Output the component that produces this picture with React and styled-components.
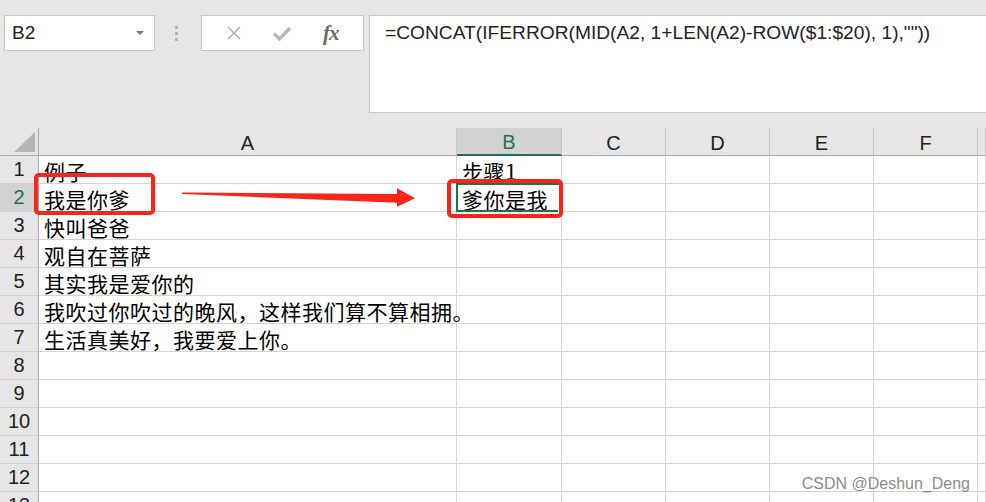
import React from 'react'
import styled, { createGlobalStyle } from 'styled-components'

const GlobalStyle = createGlobalStyle`
  html, body {
    margin: 0;
    padding: 0;
    background: #ffffff;
  }
  * {
    box-sizing: border-box;
  }
`

const Page = styled.div`
  position: relative;
  width: 986px;
  height: 502px;
  overflow: hidden;
  background: #ffffff;
  font-family: "Liberation Sans", Arial, sans-serif;
`

const Toolbar = styled.div`
  height: 128px;
  background: #e6e6e6;
  display: flex;
  align-items: flex-start;
  padding: 15px 0 0 4px;
`

const NameBox = styled.div`
  width: 151px;
  height: 36px;
  background: #fff;
  border: 1px solid #c6c6c6;
  display: flex;
  align-items: center;
  justify-content: space-between;
  padding: 0 10px 0 7px;
  font-size: 19px;
  color: #222;
`

const Caret = styled.span`
  width: 0;
  height: 0;
  border-left: 4px solid transparent;
  border-right: 4px solid transparent;
  border-top: 4px solid #777;
`

const Grip = styled.div`
  width: 46px;
  height: 36px;
  display: flex;
  flex-direction: column;
  align-items: center;
  justify-content: center;
  gap: 3px;
  padding-right: 3px;
`

const Dot = styled.span`
  width: 3px;
  height: 3px;
  background: #b4b4b4;
`

const ButtonGroup = styled.div`
  width: 163px;
  height: 36px;
  background: #fff;
  border: 1px solid #c6c6c6;
  display: flex;
  align-items: center;
  justify-content: space-around;
  padding: 0 8px;
`

const IconButton = styled.span`
  width: 30px;
  height: 30px;
  display: flex;
  align-items: center;
  justify-content: center;
`

const Fx = styled.span`
  font-family: "Liberation Serif", "Times New Roman", serif;
  font-style: italic;
  font-weight: bold;
  font-size: 21px;
  color: #6a6a6a;
  letter-spacing: -1px;
`

const FormulaBar = styled.div`
  flex: 1;
  margin-left: 5px;
  height: 98px;
  background: #fff;
  border: 1px solid #c6c6c6;
  border-right: none;
  padding: 6px 15px;
  font-family: "Liberation Sans", Arial, sans-serif;
  font-size: 19.2px;
  color: #222;
  white-space: nowrap;
`

const cols = '39px 418px 105px 104px 104px 104px 104px 1fr'

const Sheet = styled.div`
  display: grid;
  grid-template-columns: ${cols};
`

const Corner = styled.div`
  height: 28px;
  background: #e6e6e6;
  border-right: 1px solid #ababab;
  border-bottom: 1px solid #ababab;
  display: flex;
  align-items: flex-end;
  justify-content: flex-end;
  padding: 0 3px 3px 0;
`

const ColHeader = styled.div`
  height: 28px;
  background: ${p => (p.$active ? '#d2d2d2' : '#e6e6e6')};
  border-right: 1px solid #c6c6c6;
  border-bottom: ${p => (p.$active ? '2px solid #217346' : '1px solid #ababab')};
  display: flex;
  align-items: center;
  justify-content: center;
  font-size: 20px;
  color: ${p => (p.$active ? '#217346' : '#222')};
  padding-top: 3px;
`

const RowHeader = styled.div`
  height: 28px;
  background: ${p => (p.$active ? '#d2d2d2' : '#e6e6e6')};
  border-right: 1px solid #ababab;
  border-bottom: 1px solid #d0d0d0;
  display: flex;
  align-items: center;
  justify-content: center;
  font-size: 20px;
  color: ${p => (p.$active ? '#217346' : '#222')};
`

const Cell = styled.div`
  position: relative;
  height: 28px;
  border-right: 1px solid #d4d4d4;
  border-bottom: 1px solid #d4d4d4;
  display: flex;
  align-items: flex-end;
  padding: 0 0 0 5px;
  font-family: "Noto Sans CJK SC", "Liberation Sans", sans-serif;
  font-size: 21px;
  letter-spacing: 0.5px;
  line-height: 24px;
  color: #000;
  white-space: nowrap;
`

const Selection = styled.div`
  position: absolute;
  top: -1px;
  left: -1px;
  right: -1px;
  bottom: -1px;
  border: 2px solid #217346;
  pointer-events: none;
`

const FillHandle = styled.span`
  position: absolute;
  right: -4px;
  bottom: -4px;
  width: 6px;
  height: 6px;
  background: #217346;
  border: 1px solid #fff;
`

const Highlight = styled.div`
  position: absolute;
  border: 4px solid #fa2419;
  border-radius: 5px;
  pointer-events: none;
`

const Arrow = styled.svg`
  position: absolute;
  left: 180px;
  top: 186px;
  pointer-events: none;
`

const Watermark = styled.div`
  position: absolute;
  right: 16px;
  bottom: 9px;
  font-size: 16px;
  color: #8c8c8c;
  text-shadow: 0 0 2px #fff, 0 0 1px #fff;
`

const columns = ['A', 'B', 'C', 'D', 'E', 'F', '']

const data = {
  1: ['例子', '步骤1'],
  2: ['我是你爹', '爹你是我'],
  3: ['快叫爸爸'],
  4: ['观自在菩萨'],
  5: ['其实我是爱你的'],
  6: ['我吹过你吹过的晚风，这样我们算不算相拥。'],
  7: ['生活真美好，我要爱上你。'],
}

const rows = Array.from({ length: 13 }, (_, i) => i + 1)

export default function App() {
  return (
    <Page>
      <GlobalStyle />
      <Toolbar>
        <NameBox>
          B2
          <Caret />
        </NameBox>
        <Grip>
          <Dot />
          <Dot />
          <Dot />
        </Grip>
        <ButtonGroup>
          <IconButton>
            <svg width="16" height="16" viewBox="0 0 16 16">
              <path d="M2 2 L14 14 M14 2 L2 14" stroke="#b0b0b0" strokeWidth="1.6" fill="none" />
            </svg>
          </IconButton>
          <IconButton>
            <svg width="20" height="16" viewBox="0 0 20 16">
              <path d="M2 8.5 L7.5 14 L18 3" stroke="#b8b8b8" strokeWidth="3.4" fill="none" />
            </svg>
          </IconButton>
          <IconButton>
            <Fx>fx</Fx>
          </IconButton>
        </ButtonGroup>
        <FormulaBar>=CONCAT(IFERROR(MID(A2, 1+LEN(A2)-ROW($1:$20), 1),""))</FormulaBar>
      </Toolbar>

      <Sheet>
        <Corner>
          <svg width="21" height="20" viewBox="0 0 21 20">
            <polygon points="21,0 21,20 0,20" fill="#b4b4b4" />
          </svg>
        </Corner>
        {columns.map((c, i) => (
          <ColHeader key={i} $active={c === 'B'}>{c}</ColHeader>
        ))}
        {rows.map(r => (
          <React.Fragment key={r}>
            <RowHeader $active={r === 2}>{r}</RowHeader>
            {columns.map((c, i) => (
              <Cell key={i}>
                {(data[r] && data[r][i]) || ''}
                {r === 2 && c === 'B' && (
                  <Selection>
                    <FillHandle />
                  </Selection>
                )}
              </Cell>
            ))}
          </React.Fragment>
        ))}
      </Sheet>

      <Highlight style={{ left: 34, top: 173, width: 121, height: 42 }} />
      <Highlight style={{ left: 447, top: 179, width: 116, height: 39 }} />
      <Arrow width="238" height="23" viewBox="0 0 238 23">
        <polygon
          points="2,6.5 217,8 217,2.3 235,12.3 217,20.7 217,16.7 2,8"
          fill="#fa2419"
        />
      </Arrow>
      <Watermark>CSDN @Deshun_Deng</Watermark>
    </Page>
  )
}
